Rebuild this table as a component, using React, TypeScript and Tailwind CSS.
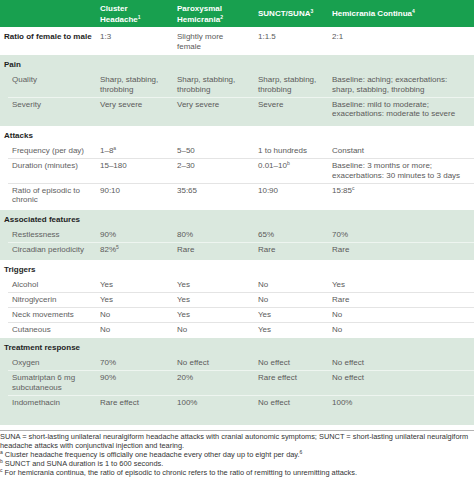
import React from "react"

const ROW = "grid grid-cols-[89px_77px_81px_74px_1fr]"
const TOP = "grid grid-cols-[97px_77px_81px_74px_1fr]"

function Sup({ children }: { children: React.ReactNode }) {
  return <span className="relative -top-[3px] text-[5px] leading-none">{children}</span>
}

type Row = { label: React.ReactNode; cells: React.ReactNode[] }

function Section({
  title,
  rows,
  green,
  extra,
}: {
  title: string
  rows: Row[]
  green?: boolean
  extra: string
}) {
  return (
    <div className={`${green ? "bg-[#dae8de]" : "bg-white"} ${extra}`}>
      <div className="pl-[4px] pt-[5px] pb-[2.5px] font-bold text-[#1e1e1e]">{title}</div>
      <div className="ml-[8px]">
        {rows.map((r, i) => (
          <div
            key={i}
            className={`${ROW} border-t pt-[2px] pb-[2.5px] ${
              i === 0 ? "border-transparent" : green ? "border-[#eef5f0]" : "border-[#e4e4e4]"
            }`}
          >
            <div className="pl-[4px] text-[#616161]">{r.label}</div>
            {r.cells.map((c, j) => (
              <div key={j} className="pl-[3px] text-[#5a5a5a] whitespace-nowrap">
                {c}
              </div>
            ))}
          </div>
        ))}
      </div>
    </div>
  )
}

export default function App() {
  return (
    <div className="w-[474px] h-[481px] bg-white font-['Liberation_Sans',Arial,sans-serif] text-[8px] leading-[9.5px] overflow-hidden">
      {/* Header */}
      <div className={`${TOP} h-[27px] bg-[#18a04f] items-center text-white font-bold leading-[11px]`}>
        <div />
        <div className="pl-[3px]">
          Cluster
          <br />
          Headache<Sup>1</Sup>
        </div>
        <div className="pl-[3px]">
          Paroxysmal
          <br />
          Hemicrania<Sup>2</Sup>
        </div>
        <div className="pl-[3px]">
          SUNCT/SUNA<Sup>3</Sup>
        </div>
        <div className="pl-[3px]">
          Hemicrania Continua<Sup>4</Sup>
        </div>
      </div>

      <div className={`${TOP} pt-[5px] pb-[4px]`}>
        <div className="pl-[4px] font-bold text-[#1e1e1e] whitespace-nowrap">Ratio of female to male</div>
        <div className="pl-[3px] text-[#5a5a5a]">1:3</div>
        <div className="pl-[3px] text-[#5a5a5a]">
          Slightly more
          <br />
          female
        </div>
        <div className="pl-[3px] text-[#5a5a5a]">1:1.5</div>
        <div className="pl-[3px] text-[#5a5a5a]">2:1</div>
      </div>

      <Section
        title="Pain"
        green
        extra="pb-[5px]"
        rows={[
          {
            label: "Quality",
            cells: [
              <>Sharp, stabbing,<br />throbbing</>,
              <>Sharp, stabbing,<br />throbbing</>,
              <>Sharp, stabbing,<br />throbbing</>,
              <>Baseline: aching; exacerbations:<br />sharp, stabbing, throbbing</>,
            ],
          },
          {
            label: "Severity",
            cells: [
              "Very severe",
              "Very severe",
              "Severe",
              <>Baseline: mild to moderate;<br />exacerbations: moderate to severe</>,
            ],
          },
        ]}
      />

      <Section
        title="Attacks"
        extra="pb-[3px]"
        rows={[
          {
            label: <span className="whitespace-nowrap">Frequency (per day)</span>,
            cells: [<>1–8<Sup>a</Sup></>, "5–50", "1 to hundreds", "Constant"],
          },
          {
            label: <span className="whitespace-nowrap">Duration (minutes)</span>,
            cells: [
              "15–180",
              "2–30",
              <>0.01–10<Sup>b</Sup></>,
              <>Baseline: 3 months or more;<br />exacerbations: 30 minutes to 3 days</>,
            ],
          },
          {
            label: <>Ratio of episodic to<br />chronic</>,
            cells: ["90:10", "35:65", "10:90", <>15:85<Sup>c</Sup></>],
          },
        ]}
      />

      <Section
        title="Associated features"
        green
        extra="pb-[3px]"
        rows={[
          { label: "Restlessness", cells: ["90%", "80%", "65%", "70%"] },
          {
            label: <span className="whitespace-nowrap">Circadian periodicity</span>,
            cells: [<>82%<Sup>5</Sup></>, "Rare", "Rare", "Rare"],
          },
        ]}
      />

      <Section
        title="Triggers"
        extra="pb-[1px]"
        rows={[
          { label: "Alcohol", cells: ["Yes", "Yes", "No", "Yes"] },
          { label: "Nitroglycerin", cells: ["Yes", "Yes", "No", "Rare"] },
          { label: <span className="whitespace-nowrap">Neck movements</span>, cells: ["No", "Yes", "Yes", "No"] },
          { label: "Cutaneous", cells: ["No", "No", "Yes", "No"] },
        ]}
      />

      <Section
        title="Treatment response"
        green
        extra="pb-[15px]"
        rows={[
          { label: "Oxygen", cells: ["70%", "No effect", "No effect", "No effect"] },
          {
            label: <>Sumatriptan 6 mg<br />subcutaneous</>,
            cells: ["90%", "20%", "Rare effect", "No effect"],
          },
          { label: "Indomethacin", cells: ["Rare effect", "100%", "No effect", "100%"] },
        ]}
      />

      {/* Footnotes */}
      <div className="mt-[5px] border-t border-[#b3b3b3] pt-[1px] text-[7.4px] leading-[9px] text-[#333] whitespace-nowrap">
        <div>
          SUNA = short-lasting unilateral neuralgiform headache attacks with cranial autonomic symptoms; SUNCT = short-lasting unilateral neuralgiform
          <br />
          headache attacks with conjunctival injection and tearing.
        </div>
        <div>
          <Sup>a</Sup> Cluster headache frequency is officially one headache every other day up to eight per day.<Sup>6</Sup>
        </div>
        <div>
          <Sup>b</Sup> SUNCT and SUNA duration is 1 to 600 seconds.
        </div>
        <div>
          <Sup>c</Sup> For hemicrania continua, the ratio of episodic to chronic refers to the ratio of remitting to unremitting attacks.
        </div>
      </div>
    </div>
  )
}
